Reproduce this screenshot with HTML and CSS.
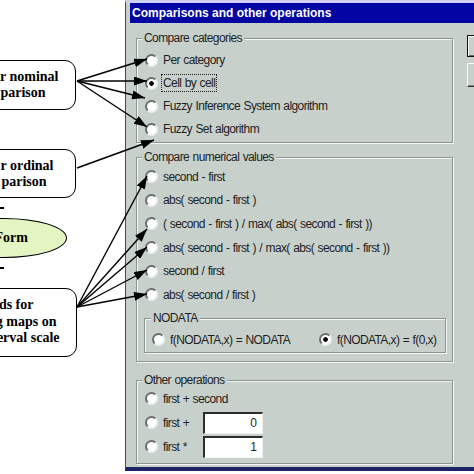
FILE: index.html
```html
<!DOCTYPE html>
<html>
<head>
<meta charset="utf-8">
<link rel="stylesheet" href="styles.css">
</head>
<body>
<div class="page">
  <div class="diagram">
    <div class="node node1"><div class="a1">r nominal</div><div class="a2">parison</div></div>
    <div class="node node2"><div class="b1">r ordinal</div><div class="b2">parison</div></div>
    <div class="ellipse">Form</div>
    <div class="node node3"><div class="c1">ds for</div><div class="c2">g maps on</div><div class="c3">erval scale</div></div>
  </div>
  <div class="dialog">
    <div class="titlebar">Comparisons and other operations</div>
    <div class="client">
      <div class="groups">
        <div class="group g1">
          <div class="label">Compare categories</div>
          <div class="rows">
            <div class="row"><span class="radio"></span><span>Per category</span></div>
            <div class="row"><span class="radio on"></span><span class="focus">Cell by cell</span></div>
            <div class="row"><span class="radio"></span><span>Fuzzy Inference System algorithm</span></div>
            <div class="row"><span class="radio"></span><span>Fuzzy Set algorithm</span></div>
          </div>
        </div>
        <div class="group g2">
          <div class="label">Compare numerical values</div>
          <div class="rows">
            <div class="row"><span class="radio"></span><span>second - first</span></div>
            <div class="row"><span class="radio"></span><span>abs( second - first )</span></div>
            <div class="row"><span class="radio"></span><span>( second - first ) / max( abs( second - first ))</span></div>
            <div class="row"><span class="radio"></span><span>abs( second - first ) / max( abs( second - first ))</span></div>
            <div class="row"><span class="radio"></span><span>second / first</span></div>
            <div class="row"><span class="radio"></span><span>abs( second / first )</span></div>
          </div>
          <div class="group nodata">
            <div class="label">NODATA</div>
            <div class="nodata-row">
              <div class="item"><span class="radio"></span><span>f(NODATA,x) = NODATA</span></div>
              <div class="item"><span class="radio on"></span><span>f(NODATA,x) = f(0,x)</span></div>
            </div>
          </div>
        </div>
        <div class="group g3">
          <div class="label">Other operations</div>
          <div class="rows">
            <div class="row op"><span class="radio"></span><span>first + second</span></div>
            <div class="row op"><span class="radio"></span><span class="op-label">first +</span><span class="field">0</span></div>
            <div class="row op"><span class="radio"></span><span class="op-label">first *</span><span class="field">1</span></div>
          </div>
        </div>
      </div>
      <div class="buttons">
        <div class="btn default"></div>
        <div class="btn"></div>
      </div>
    </div>
  </div>
  <svg class="arrows" width="474" height="474" viewBox="0 0 474 474">
    <defs>
      <marker id="ah" viewBox="0 0 13 9" refX="13" refY="4.5" markerWidth="13" markerHeight="9" markerUnits="userSpaceOnUse" orient="auto">
        <path d="M0,0 L13,4.5 L0,9 z" fill="#000"/>
      </marker>
    </defs>
    <g stroke="#000" stroke-width="1.4" fill="none" marker-end="url(#ah)">
      <line x1="77" y1="81" x2="147" y2="59"/>
      <line x1="77" y1="81" x2="147" y2="81"/>
      <line x1="77" y1="81" x2="145" y2="98"/>
      <line x1="77" y1="81" x2="147" y2="127"/>
      <line x1="77" y1="168" x2="154" y2="140"/>
      <line x1="77" y1="307" x2="147" y2="176"/>
      <line x1="77" y1="307" x2="147" y2="229"/>
      <line x1="77" y1="307" x2="147" y2="247"/>
      <line x1="77" y1="307" x2="147" y2="270"/>
      <line x1="77" y1="307" x2="147" y2="294"/>
    </g>
    <g stroke="#000" stroke-width="2">
      <line x1="0" y1="208" x2="4" y2="208"/>
      <line x1="0" y1="268" x2="4" y2="268"/>
    </g>
  </svg>
</div>
</body>
</html>
```
FILE: styles.css
```css
* { box-sizing: border-box; }
body {
  margin: 0;
  background: #fff;
  font-family: "Liberation Sans", Arial, sans-serif;
  font-size: 12px;
  letter-spacing: -0.6px;
  word-spacing: 0.7px;
  color: #1e1e1e;
}
.page {
  position: relative;
  width: 474px;
  height: 474px;
  overflow: hidden;
  display: flex;
}
.diagram {
  position: relative;
  width: 125px;
  flex: none;
  font-family: "Liberation Serif", "Times New Roman", serif;
  font-weight: bold;
  font-size: 14px;
  letter-spacing: 0;
  word-spacing: 0;
  color: #000;
}
.node {
  position: absolute;
  background: #fff;
  border: 1.5px solid #000;
  border-radius: 11px;
  line-height: 16px;
  text-align: right;
  white-space: nowrap;
}
.node1 { left: -40px; top: 60px; width: 116px; height: 50px; padding-top: 7.5px; }
.node1 .a1 { padding-right: 16.5px; }
.node1 .a2 { padding-right: 29.5px; }
.node2 { left: -40px; top: 149px; width: 116px; height: 49px; padding-top: 7.5px; }
.node2 .b1 { padding-right: 21.5px; }
.node2 .b2 { padding-right: 28.5px; }
.node3 { left: -40px; top: 288px; width: 117px; height: 69px; padding-top: 8px; line-height: 16.5px; }
.node3 .c1 { padding-right: 42.5px; }
.node3 .c2 { padding-right: 19.5px; }
.node3 .c3 { padding-right: 16.5px; }
.ellipse {
  position: absolute;
  left: -60px;
  top: 218px;
  width: 127px;
  height: 40px;
  border-radius: 50%;
  background: #e2f5c2;
  border: 1.5px solid #000;
  display: flex;
  align-items: center;
  justify-content: flex-end;
  padding-right: 38px;
  font-size: 14px;
}
.dialog {
  flex: 1;
  height: 471px;
  background: #c8d0cc;
  border-left: 1px solid #3a3ac2;
  border-top: 3px solid #cfd0ee;
  border-bottom: 4px solid #1e2266;
  padding-left: 4px;
  display: flex;
  flex-direction: column;
  overflow: hidden;
}
.titlebar {
  height: 20px;
  flex: none;
  background: #0404a2;
  color: #fff;
  font-weight: bold;
  font-size: 12px;
  letter-spacing: 0;
  word-spacing: 0;
  line-height: 20px;
  padding-left: 2px;
  white-space: nowrap;
}
.client {
  display: flex;
  padding: 12px 0 0 6px;
}
.groups {
  width: 317px;
  flex: none;
  padding-top: 3px;
}
.group {
  border: 1px solid #8d9591;
  box-shadow: inset 1px 1px 0 #f4f6f6, 1px 1px 0 #f4f6f6;
  padding: 0 6px 0 8px;
}
.label {
  display: table;
  height: 14px;
  line-height: 14px;
  margin: -8px 0 0 -3px;
  padding: 0 2px;
  background: #c8d0cc;
  white-space: nowrap;
}
.row {
  display: flex;
  align-items: center;
  height: 23px;
  white-space: nowrap;
}
.g1 .rows { padding-top: 3.5px; padding-bottom: 1.5px; }
.g2 { margin-top: 14px; padding-bottom: 8px; }
.g2 .row { height: 23.6px; }
.g2 .rows { padding-top: 1px; }
.nodata {
  margin: 11.4px 0 0 -1px;
  padding: 0 0 2px 7px;
}
.nodata .label { margin-left: -1px; }
.nodata-row {
  display: grid;
  grid-template-columns: 167px auto;
  padding-top: 5px;
  height: 25px;
  align-items: center;
}
.item {
  display: flex;
  align-items: center;
  white-space: nowrap;
}
.g3 { margin-top: 18px; padding-bottom: 4px; }
.g3 .row { height: 24px; }
.radio {
  flex: none;
  width: 13px;
  height: 13px;
  border-radius: 50%;
  background: #fff;
  border: 2px solid;
  border-color: #6a6e6c #eef0f0 #eef0f0 #6a6e6c;
  margin-right: 5px;
}
.radio.on {
  background: radial-gradient(circle, #000 0 2px, #fff 2.6px);
}
.focus {
  outline: 1px dotted #222;
  outline-offset: 1px;
}
.op-label { width: 40px; }
.field {
  width: 60px;
  height: 22px;
  background: #fff;
  border-style: solid;
  border-width: 2px 1px 1px 2px;
  border-color: #2c2c2c #f2f2f2 #f2f2f2 #2c2c2c;
  text-align: right;
  padding-right: 5px;
  line-height: 19px;
  font-size: 12px;
  letter-spacing: 0;
}
.buttons {
  margin-left: 14px;
  flex: none;
}
.btn {
  width: 80px;
  height: 24px;
  background: #c8d0cc;
  border: 1px solid;
  border-color: #fafafa #303030 #303030 #fafafa;
  box-shadow: inset -1px -1px 0 #888;
}
.btn.default {
  height: 22px;
  margin-bottom: 6px;
  border-color: #111;
  box-shadow: inset 1px 1px 0 #fafafa, inset -1px -1px 0 #666;
}
.arrows {
  position: absolute;
  left: 0;
  top: 0;
  pointer-events: none;
}
```
